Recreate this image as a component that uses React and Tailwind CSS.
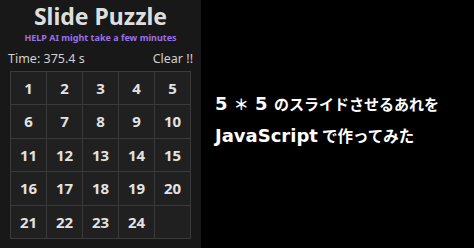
import React from 'react';

const tiles = Array.from({ length: 25 }, (_, i) => (i < 24 ? i + 1 : null));

function App() {
  return (
    <div className="w-[474px] h-[248px] bg-black flex overflow-hidden" style={{ fontFamily: '"Noto Sans", "Noto Sans CJK JP", sans-serif' }}>
      <div className="w-[201px] h-full bg-[#181818] flex flex-col">
        <h1 className="text-center text-[23px] leading-[26px] font-bold text-[#dedede] pt-[3px]">Slide Puzzle</h1>
        <p className="text-center text-[9px] leading-[12px] font-bold text-[#9a72e6] mt-[3px]">HELP AI might take a few minutes</p>
        <div className="flex justify-between items-center px-[8px] mt-[7px] text-[12.5px] leading-[16px] text-[#cfcfcf]">
          <span>Time: 375.4 s</span>
          <span>Clear !!</span>
        </div>
        <div className="ml-[10px] mt-[4px] w-[181px] grid grid-cols-5 border-l border-t border-[#3a3a3a] bg-[#202020]">
          {tiles.map((n, i) => (
            <div key={i} className="h-[33.4px] flex items-center justify-center border-r border-b border-[#3a3a3a] text-[15px] font-bold text-[#e2e2e2]">
              {n}
            </div>
          ))}
        </div>
      </div>
      <div className="flex-1 pl-[14px] pt-[89px] text-white font-bold leading-[30px]" style={{ fontFamily: '"DejaVu Sans", "Noto Sans CJK JP", sans-serif' }}>
        <p className="whitespace-nowrap">
          <span className="text-[18px]">5 </span>
          <span className="text-[15px]" style={{ fontFamily: '"Noto Sans CJK JP", sans-serif' }}>＊</span>
          <span className="text-[18px]"> 5 </span>
          <span className="text-[15px]" style={{ fontFamily: '"Noto Sans CJK JP", sans-serif' }}>のスライドさせるあれを</span>
        </p>
        <p className="whitespace-nowrap">
          <span className="text-[18px]">JavaScript</span>
          <span className="text-[15.5px] pl-[4px]" style={{ fontFamily: '"Noto Sans CJK JP", sans-serif' }}>で作ってみた</span>
        </p>
      </div>
    </div>
  );
}

export default App;
